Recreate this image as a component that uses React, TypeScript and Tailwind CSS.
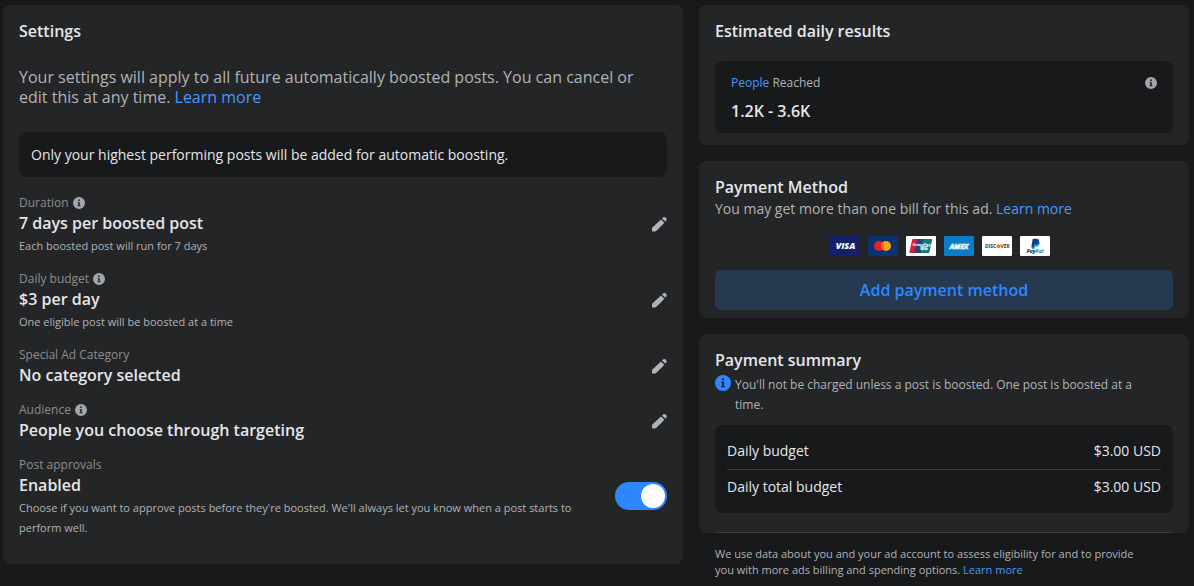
import { useState, type ReactNode } from 'react'
import clsx from 'clsx'

type Setting = {
  label: string
  value: string
  note?: string
  info?: boolean
}

const settings: Setting[] = [
  { label: 'Duration', value: '7 days per boosted post', note: 'Each boosted post will run for 7 days', info: true },
  { label: 'Daily budget', value: '$3 per day', note: 'One eligible post will be boosted at a time', info: true },
  { label: 'Special Ad Category', value: 'No category selected' },
  { label: 'Audience', value: 'People you choose through targeting', info: true },
]

const summary = [
  { label: 'Daily budget', amount: '$3.00 USD' },
  { label: 'Daily total budget', amount: '$3.00 USD' },
]

function InfoIcon({ className }: { className?: string }) {
  return (
    <svg viewBox="0 0 12 12" className={clsx('shrink-0', className)} aria-hidden="true">
      <path
        fill="currentColor"
        fillRule="evenodd"
        d="M6 0a6 6 0 1 0 0 12A6 6 0 0 0 6 0Zm0 2.3a.9.9 0 1 1 0 1.8.9.9 0 0 1 0-1.8ZM4.9 4.9h1.4c.3 0 .5.2.5.5v2.9h.4a.4.4 0 0 1 0 .9H4.8a.4.4 0 0 1 0-.9h.5V5.8h-.4a.45.45 0 0 1 0-.9Z"
      />
    </svg>
  )
}

function PencilIcon() {
  return (
    <svg viewBox="0 0 16 16" className="size-4" fill="currentColor" aria-hidden="true">
      <path d="M10 3.400 1.600 11.300c-.4.4-.6.8-.6 1.300v2.400c0 .3.200.5.500.5h2.400c.5 0 .9-.2 1.300-.5L13.400 6.800 10 3.400Z" />
      <path d="m11 2.400.900-.900c.8-.8 2-.8 2.800 0l.400.400c.8.8.8 2 0 2.800l-.900.900L11 2.400Z" />
    </svg>
  )
}

function Card({ className, children }: { className?: string; children: ReactNode }) {
  return <section className={clsx('rounded-lg bg-[#242526] px-4 pt-4', className)}>{children}</section>
}

function LearnMore() {
  return (
    <a href="#" className="text-[#4599ff] hover:underline">
      Learn more
    </a>
  )
}

// Accepted cards, 30x20 each
function CardLogos() {
  return (
    <div className="flex justify-center *:mr-2 *:h-5 *:w-[30px]">
      <svg viewBox="0 0 30 20" role="img" aria-label="Visa">
        <rect width="30" height="20" rx="1" fill="#142069" />
        <text x="15.5" y="13.2" textAnchor="middle" fontSize="9" fontWeight="800" fontStyle="italic" fill="#fff">VISA</text>
      </svg>
      <svg viewBox="0 0 30 20" role="img" aria-label="Mastercard">
        <rect width="30" height="20" rx="1" fill="#0a3370" />
        <circle cx="11" cy="10" r="5" fill="#eb1c26" />
        <circle cx="18" cy="10" r="5" fill="#f79e1b" />
        <path d="M14.5 6.4a5 5 0 0 1 0 7.2 5 5 0 0 1 0-7.2Z" fill="#f26322" />
      </svg>
      <svg viewBox="0 0 30 20" role="img" aria-label="UnionPay">
        <rect width="30" height="20" rx="1" fill="#fff" />
        <path d="M7.500 3h6l-3 14h-6c-.8 0-1.200-.5-1-1.300L6 4.300C6.200 3.500 6.700 3 7.500 3Z" fill="#d81f3a" />
        <path d="M12.500 3h7l-3 14h-7c-.8 0-1.100-.5-.9-1.300L11 4.300c.200-.8.700-1.300 1.500-1.300Z" fill="#1e477d" />
        <path d="M18.500 3h6.500c.8 0 1.200.5 1 1.300l-2.500 11.400c-.2.8-.7 1.300-1.500 1.300h-7.500l2.500-12.700c.2-.8.700-1.300 1.500-1.300Z" fill="#0c7c7c" />
        <text x="15.5" y="9.6" textAnchor="middle" fontSize="4" fontWeight="700" fontStyle="italic" fill="#fff">UnionPay</text>
        <text x="18" y="14" textAnchor="middle" fontSize="4" fontWeight="700" fill="#fff">银联</text>
      </svg>
      <svg viewBox="0 0 30 20" role="img" aria-label="American Express">
        <rect width="30" height="20" rx="1" fill="#0a7cc8" />
        <text x="15" y="12.8" textAnchor="middle" fontSize="7" fontWeight="700" fontStyle="italic" fill="none" stroke="#fff" strokeWidth=".7">AMEX</text>
      </svg>
      <svg viewBox="0 0 30 20" role="img" aria-label="Discover">
        <rect width="30" height="20" rx="1" fill="#fff" />
        <text x="3" y="12" fontSize="5" fontWeight="700" fill="#3a3a3a">DISC</text>
        <circle cx="16.5" cy="10.2" r="2" fill="#f07c22" />
        <text x="18.4" y="12" fontSize="5" fontWeight="700" fill="#3a3a3a">VER</text>
      </svg>
      <svg viewBox="0 0 30 20" role="img" aria-label="PayPal">
        <rect width="30" height="20" rx="1" fill="#fff" />
        <path d="M13.5 4.500h3.800c2 0 2.800 1.400 2.400 3.200-.4 2-1.800 2.900-3.700 2.900h-1l-.5 2.600h-2.400l1.400-8.700Z" fill="#179bd7" />
        <path d="M12.900 2.700h3.600c2 0 2.800 1.300 2.400 3-.4 2-1.800 2.900-3.700 2.900h-1.100l-.5 3h-2.300l1.300-8.300c0-.4.100-.6.300-.6Z" fill="#1b3d82" />
        <text x="15" y="16.8" textAnchor="middle" fontSize="5" fontWeight="800" fontStyle="italic" fill="#1b3d82">
          Pay<tspan fill="#179bd7">Pal</tspan>
        </text>
      </svg>
    </div>
  )
}

function SettingsCard() {
  const [approvals, setApprovals] = useState(true)

  return (
    <Card className="pb-[26px]">
      <h2 className="text-[16px] leading-5 font-semibold">Settings</h2>
      <p className="mt-[26px] pr-4 text-[16px] leading-5 text-[#b0b3b8]">
        Your settings will apply to all future automatically boosted posts. You can cancel or edit this at any time.{' '}
        <LearnMore />
      </p>
      <p className="mt-[25px] rounded-lg bg-[#18191a] p-3 text-[14px] leading-[21px]">
        Only your highest performing posts will be added for automatic boosting.
      </p>

      <div className="mt-[15px] flex flex-col gap-3">
        {settings.map((s) => (
          <div key={s.label} className="flex items-center justify-between">
            <div>
              <div className="flex items-center gap-1 text-[12px] leading-[21px] text-[#8a8d91]">
                {s.label}
                {s.info && <InfoIcon className="size-3 text-[#a3a6ad]" />}
              </div>
              <h3 className="pb-0.5 text-[16px] leading-5 font-semibold">{s.value}</h3>
              {s.note && <p className="mt-px text-[11px] leading-5 text-[#b0b3b8]">{s.note}</p>}
            </div>
            <button type="button" aria-label={`Edit ${s.label}`} className="text-[#b0b3b8]">
              <PencilIcon />
            </button>
          </div>
        ))}

        <div className="flex items-center justify-between gap-5">
          <div>
            <label htmlFor="approvals" className="block text-[12px] leading-[21px] text-[#8a8d91]">
              Post approvals
            </label>
            <h3 className="pb-0.5 text-[16px] leading-5 font-semibold">{approvals ? 'Enabled' : 'Disabled'}</h3>
            <p className="mt-px text-[11px] leading-5 text-[#b0b3b8]">
              Choose if you want to approve posts before they're boosted. We'll always let you know when a post starts to
              perform well.
            </p>
          </div>
          <input
            id="approvals"
            type="checkbox"
            role="switch"
            checked={approvals}
            onChange={(e) => setApprovals(e.target.checked)}
            className="flex h-7 w-[52px] shrink-0 appearance-none items-center rounded-full bg-[#4e4f50] px-0.5 before:size-6 before:rounded-full before:bg-white checked:justify-end checked:bg-[#2d88ff]"
          />
        </div>
      </div>
    </Card>
  )
}

export default function App() {
  return (
    <main className="grid min-h-screen grid-cols-[68fr_49fr] items-start gap-4 bg-[#18191a] pt-[5px] pr-[5px] pl-[3px] font-['Open_Sans','Noto_Sans_CJK_SC',sans-serif] text-[#e4e6eb]">
      <SettingsCard />

      <div>
        <Card className="pb-3">
          <h2 className="text-[16px] leading-5 font-semibold">Estimated daily results</h2>
          <div className="mt-5 rounded-lg bg-[#18191a] px-4 py-3">
            <div className="flex items-center justify-between text-[12px] leading-5 text-[#b0b3b8]">
              <span>
                <a href="#" className="text-[#4599ff]">People</a> Reached
              </span>
              <InfoIcon className="size-3 text-[#a3a6ad]" />
            </div>
            <p className="mt-2 text-[16px] leading-5 font-semibold">1.2K - 3.6K</p>
          </div>
        </Card>

        <Card className="mt-4 pb-2">
          <h2 className="text-[16px] leading-5 font-semibold">Payment Method</h2>
          <p className="mt-0.5 mb-[17px] text-[14px] leading-5 text-[#b0b3b8]">
            You may get more than one bill for this ad. <LearnMore />
          </p>
          <CardLogos />
          <button type="button" className="mt-[14px] h-10 w-full rounded-md bg-[#263951] text-[16px] font-semibold text-[#2d88ff]">
            Add payment method
          </button>
        </Card>

        <Card className="mt-4 pb-5">
          <h2 className="text-[16px] leading-5 font-semibold">Payment summary</h2>
          <div className="mt-[5px] flex gap-1 pr-4">
            <InfoIcon className="size-4 text-[#2d88ff]" />
            <p className="text-[12px] leading-5 text-[#b0b3b8]">
              You'll not be charged unless a post is boosted. One post is boosted at a time.
            </p>
          </div>
          <div className="mt-[10px] rounded-lg bg-[#18191a] px-3 py-2">
            <table className="w-full text-[14px] leading-5">
              <tbody>
                {summary.map((row) => (
                  <tr key={row.label} className="h-9 border-b border-[#3e4042] last:border-none">
                    <th scope="row" className="text-left font-normal">{row.label}</th>
                    <td className="text-right">{row.amount}</td>
                  </tr>
                ))}
              </tbody>
            </table>
          </div>
        </Card>

        <p className="mx-4 -mt-px border-t border-[#3e4042] pt-[13px] pr-7 text-[11px] leading-4 text-[#b0b3b8]">
          We use data about you and your ad account to assess eligibility for and to provide you with more ads billing and
          spending options. <LearnMore />
        </p>
      </div>
    </main>
  )
}
